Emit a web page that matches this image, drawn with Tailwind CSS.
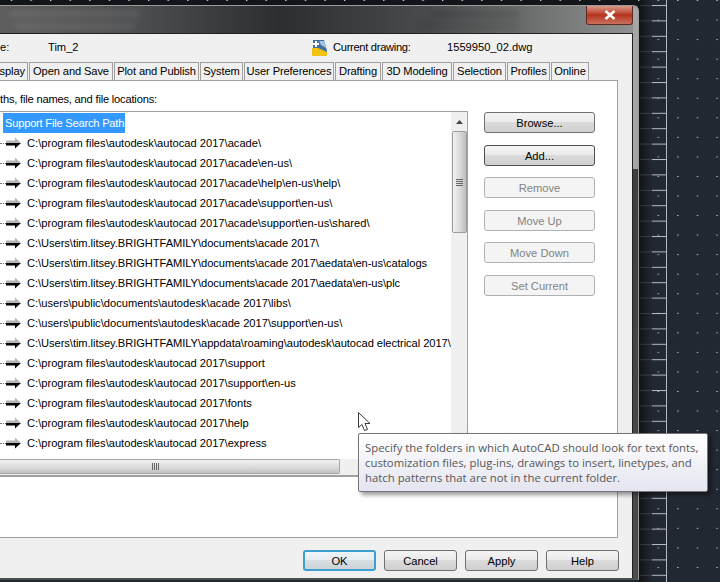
<!DOCTYPE html>
<html lang="en">
<head>
  <meta charset="UTF-8" />
  <title>Options - Files</title>
  <script src="https://cdn.jsdelivr.net/npm/@tailwindcss/browser@4"></script>
</head>
<body class="bg-[#222831]">
  <div class="relative w-[720px] h-[582px] overflow-hidden bg-[#222831] font-['Liberation_Sans',sans-serif] text-[11.15px] text-black">

    <!-- AutoCAD model space behind the dialog -->
    <svg class="absolute left-0 top-0" width="720" height="582">
      <defs>
        <pattern id="dots" x="0" y="0" width="19.6" height="19.55" patternUnits="userSpaceOnUse">
          <rect x="11" y="0" width="1" height="1" fill="#fff" />
        </pattern>
        <pattern id="rules" x="0" y="5" width="26" height="15.4" patternUnits="userSpaceOnUse">
          <rect width="26" height="1" fill="#b9bcbf" />
        </pattern>
        <linearGradient id="edge"><stop offset="0" stop-color="#0a0c0f" /><stop offset="1" stop-color="#222831" /></linearGradient>
      </defs>
      <rect x="0" y="0" width="720" height="582" fill="url(#dots)" />
      <rect x="640" y="5" width="26" height="577" fill="url(#rules)" />
      <rect x="666" y="0" width="1" height="582" fill="#b9bcbf" />
      <rect x="638" y="0" width="14" height="582" fill="url(#edge)" opacity="0.8" />
      <rect x="0" y="0" width="640" height="5" fill="#0d0f12" opacity="0.75" />
      <rect x="0" y="0" width="640" height="5" fill="url(#dots)" />
    </svg>

    <!-- Dialog window -->
    <div class="absolute left-0 top-[5px] w-[639px] h-[575px] flex flex-col rounded-tr-md border-t border-r border-[#9a9a9a] bg-[linear-gradient(#a6a6a6_0,#a6a6a6_163px,#3c3e40_163px,#4a4c4e_100%)] pr-[5px] pb-[2px] overflow-hidden">
      <div class="relative h-[27px] shrink-0 bg-[linear-gradient(90deg,#5e5e5e_0,#4c4d4e_140px,#2c2e31_280px,#4a4b4c_430px,#8f9090_630px)] overflow-hidden">
        <!-- blurred window title -->
        <div class="absolute left-[10px] top-[5px] w-[130px] h-[6px] bg-white/10 blur-[3px]"></div>
        <div class="absolute left-[15px] top-[17px] w-[120px] h-[6px] bg-white/10 blur-[3px]"></div>
        <div class="absolute left-[430px] top-[5px] w-[90px] h-[6px] bg-black/15 blur-[3px]"></div>
        <div class="absolute left-[420px] top-[17px] w-[100px] h-[6px] bg-black/10 blur-[3px]"></div>
      </div>
      <button class="absolute right-[5px] top-0 w-[47px] h-[19px] rounded-b-[3px] border border-t-0 border-[#5d2a22] bg-gradient-to-b from-[#d99a8a] via-[#b5321c] to-[#c9705c] flex items-center justify-center">
        <svg width="12" height="10" viewBox="0 0 12 10"><path d="M1.5 1 L10.5 9 M10.5 1 L1.5 9" stroke="#fff" stroke-width="2.6" /></svg>
      </button>

      <div class="flex-1 flex flex-col bg-[#f0f0f0] border-t border-r border-[#222]">
        <!-- Profile row -->
        <div class="h-[27px] shrink-0 flex items-center">
          <span class="w-[48px]">e:</span>
          <span class="w-[264px]">Tim_2</span>
          <svg class="w-[16px] h-[17px] mr-[5px]" viewBox="0 0 16 17">
            <path d="M1 1H12L15 12V14H1z" fill="#3f6ea3" />
            <path d="M7 2H12L14 9L9 6z" fill="#a9c4dd" />
            <path d="M3 2h2v2h2v2H5v2H3V6H1V4h2z" fill="#fff" />
            <path d="M0 9H6L15 13V17H0z" fill="#f2c313" />
          </svg>
          <span class="w-[114px] tracking-[-0.3px]">Current drawing:</span>
          <span>1559950_02.dwg</span>
        </div>

        <!-- Tabs -->
        <div class="h-[19px] shrink-0 flex items-end gap-[1px] whitespace-nowrap tracking-[-0.12px]">
          <div class="w-[28px] h-[18px] bg-[#f0f0f0] border border-l-0 border-b-0 border-[#a0a0a0] flex items-center justify-end pr-[2px]">splay</div>
          <div class="w-[84px] h-[18px] bg-[#f0f0f0] border border-b-0 border-[#a0a0a0] flex items-center justify-center">Open and Save</div>
          <div class="w-[85px] h-[18px] bg-[#f0f0f0] border border-b-0 border-[#a0a0a0] flex items-center justify-center">Plot and Publish</div>
          <div class="w-[43px] h-[18px] bg-[#f0f0f0] border border-b-0 border-[#a0a0a0] flex items-center justify-center">System</div>
          <div class="w-[90px] h-[18px] bg-[#f0f0f0] border border-b-0 border-[#a0a0a0] flex items-center justify-center">User Preferences</div>
          <div class="w-[46px] h-[18px] bg-[#f0f0f0] border border-b-0 border-[#a0a0a0] flex items-center justify-center">Drafting</div>
          <div class="w-[70px] h-[18px] bg-[#f0f0f0] border border-b-0 border-[#a0a0a0] flex items-center justify-center">3D Modeling</div>
          <div class="w-[53px] h-[18px] bg-[#f0f0f0] border border-b-0 border-[#a0a0a0] flex items-center justify-center">Selection</div>
          <div class="w-[43px] h-[18px] bg-[#f0f0f0] border border-b-0 border-[#a0a0a0] flex items-center justify-center">Profiles</div>
          <div class="w-[38px] h-[18px] bg-[#f0f0f0] border border-b-0 border-[#a0a0a0] flex items-center justify-center">Online</div>
        </div>

        <!-- Files tab panel -->
        <div class="w-[618px] h-[458px] shrink-0 bg-white border-t border-r border-b border-[#a0a0a0] flex flex-col">
          <div class="h-[30px] shrink-0 flex items-center pt-[6px] tracking-[-0.2px]">ths, file names, and file locations:</div>
          <div class="flex">
            <!-- Tree list -->
            <div class="relative w-[468px] h-[366px] border-t border-r border-b border-[#a0a0a0] flex flex-col">
              <div class="flex-1 flex min-h-0">
                <div class="flex-1 min-w-0 pt-[1px] overflow-hidden">
                  <div class="h-[20px] flex items-center pl-[3px]">
                    <span class="h-[20px] w-[122px] flex items-center pl-[2px] bg-[#3399ff] text-white tracking-[-0.22px] whitespace-nowrap">Support File Search Path</span>
                  </div>
                  <div id="rows"></div>
                </div>
                <!-- Vertical scrollbar -->
                <div class="w-[16px] shrink-0 bg-[#f0f0f0] flex flex-col items-center">
                  <div class="h-[19px] shrink-0 flex items-center justify-center">
                    <svg width="7" height="4" viewBox="0 0 7 4"><path d="M3.5 0L7 4H0z" fill="#444" /></svg>
                  </div>
                  <div class="w-[15px] h-[102px] rounded-[2px] border border-[#9c9c9c] bg-gradient-to-r from-[#f2f2f2] via-[#dcdcdc] to-[#bdbdbd] flex flex-col items-center justify-center gap-[1px]">
                    <span class="w-[7px] h-[1px] bg-[#666]"></span>
                    <span class="w-[7px] h-[1px] bg-[#666]"></span>
                    <span class="w-[7px] h-[1px] bg-[#666]"></span>
                    <span class="w-[7px] h-[1px] bg-[#666]"></span>
                  </div>
                </div>
              </div>
              <!-- Horizontal scrollbar -->
              <div class="h-[17px] shrink-0 bg-[#f0f0f0] border-b border-[#a0a0a0] flex">
                <div class="w-[340px] h-[15px] rounded-r-[2px] border border-l-0 border-[#a5a5a5] bg-gradient-to-b from-[#f2f2f2] via-[#dedede] to-[#c2c2c2] flex items-center justify-center gap-[1px] pr-[28px]">
                  <span class="w-[1px] h-[7px] bg-[#666]"></span>
                  <span class="w-[1px] h-[7px] bg-[#666]"></span>
                  <span class="w-[1px] h-[7px] bg-[#666]"></span>
                  <span class="w-[1px] h-[7px] bg-[#666]"></span>
                </div>
              </div>
            </div>

            <!-- Side buttons -->
            <div class="flex flex-col ml-[16px] w-[111px] pt-[1px]">
              <button class="h-[21px] pt-[1px] rounded-[3px] border border-[#707070] bg-[linear-gradient(#f4f4f4,#ebebeb_45%,#dbdbdb_50%,#cfcfcf)]">Browse...</button>
              <button class="h-[21px] pt-[1px] mt-[12px] rounded-[3px] border border-[#505050] bg-[linear-gradient(#f4f4f4,#ebebeb_45%,#dbdbdb_50%,#cfcfcf)]">Add...</button>
              <button class="h-[21px] pt-[1px] mt-[11px] rounded-[3px] border border-[#adb2b5] bg-[#f4f4f4] text-[#838383]">Remove</button>
              <button class="h-[21px] pt-[1px] mt-[12px] rounded-[3px] border border-[#adb2b5] bg-[#f4f4f4] text-[#838383]">Move Up</button>
              <button class="h-[21px] pt-[1px] mt-[11px] rounded-[3px] border border-[#adb2b5] bg-[#f4f4f4] text-[#838383]">Move Down</button>
              <button class="h-[21px] pt-[1px] mt-[12px] rounded-[3px] border border-[#adb2b5] bg-[#f4f4f4] text-[#838383]">Set Current</button>
            </div>
          </div>
        </div>

        <!-- Dialog buttons -->
        <div class="flex-1 flex justify-end items-start gap-[8px] pt-[12px] pr-[13px]">
          <button class="w-[73px] h-[21px] pt-[1px] rounded-[3px] border-2 border-[#3c9fd0] bg-[linear-gradient(#eef5f9,#e6edf1_45%,#d8dfe3_50%,#ccd3d7)]">OK</button>
          <button class="w-[73px] h-[21px] pt-[1px] rounded-[3px] border border-[#707070] bg-[linear-gradient(#f4f4f4,#ebebeb_45%,#dbdbdb_50%,#cfcfcf)]">Cancel</button>
          <button class="w-[73px] h-[21px] pt-[1px] rounded-[3px] border border-[#707070] bg-[linear-gradient(#f4f4f4,#ebebeb_45%,#dbdbdb_50%,#cfcfcf)]">Apply</button>
          <button class="w-[73px] h-[21px] pt-[1px] rounded-[3px] border border-[#707070] bg-[linear-gradient(#f4f4f4,#ebebeb_45%,#dbdbdb_50%,#cfcfcf)]">Help</button>
        </div>
      </div>
    </div>

    <!-- Mouse pointer -->
    <svg class="absolute left-[358px] top-[412px]" width="14" height="20" viewBox="0 0 14 20">
      <path d="M0.5 0.5V15.5L4 12.5L6.5 18.5L9.5 17.5L7 11.5H12z" fill="#fff" stroke="#3a3a3a" stroke-width="1" />
    </svg>

    <!-- Tooltip -->
    <div class="absolute left-[358px] top-[433px] w-[350px] h-[59px] rounded-[2px] border border-[#767676] bg-gradient-to-b from-white to-[#e4e5f0] shadow-[3px_3px_4px_rgba(0,0,0,0.4)] pl-[6px] pt-[6px] font-['Open_Sans',sans-serif] text-[11.35px] leading-[15px] text-[#575757] whitespace-nowrap">
      <div>Specify the folders in which AutoCAD should look for text fonts,</div>
      <div>customization files, plug-ins, drawings to insert, linetypes, and</div>
      <div>hatch patterns that are not in the current folder.</div>
    </div>
  </div>

  <script>
    const paths = [
      'C:\\program files\\autodesk\\autocad 2017\\acade\\',
      'C:\\program files\\autodesk\\autocad 2017\\acade\\en-us\\',
      'C:\\program files\\autodesk\\autocad 2017\\acade\\help\\en-us\\help\\',
      'C:\\program files\\autodesk\\autocad 2017\\acade\\support\\en-us\\',
      'C:\\program files\\autodesk\\autocad 2017\\acade\\support\\en-us\\shared\\',
      'C:\\Users\\tim.litsey.BRIGHTFAMILY\\documents\\acade 2017\\',
      'C:\\Users\\tim.litsey.BRIGHTFAMILY\\documents\\acade 2017\\aedata\\en-us\\catalogs',
      'C:\\Users\\tim.litsey.BRIGHTFAMILY\\documents\\acade 2017\\aedata\\en-us\\plc',
      'C:\\users\\public\\documents\\autodesk\\acade 2017\\libs\\',
      'C:\\users\\public\\documents\\autodesk\\acade 2017\\support\\en-us\\',
      'C:\\Users\\tim.litsey.BRIGHTFAMILY\\appdata\\roaming\\autodesk\\autocad electrical 2017\\',
      'C:\\program files\\autodesk\\autocad 2017\\support',
      'C:\\program files\\autodesk\\autocad 2017\\support\\en-us',
      'C:\\program files\\autodesk\\autocad 2017\\fonts',
      'C:\\program files\\autodesk\\autocad 2017\\help',
      'C:\\program files\\autodesk\\autocad 2017\\express'
    ];

    document.getElementById('rows').innerHTML = paths.map(p => `
      <div class="h-[20px] flex items-center whitespace-nowrap">
        <span class="w-[6px] shrink-0 border-t border-dotted border-[#777]"></span>
        <svg class="w-[15px] h-[12px] shrink-0" viewBox="0 0 15 12">
          <path d="M0 3.5H9V0.5L15 6H0z" fill="#b5b5b5" />
          <path d="M0 6H15L9 11.5V8.5H0z" fill="#000" />
        </svg>
        <span class="ml-[6px] ${p.includes('BRIGHTFAMILY') ? 'tracking-[-0.06px]' : ''}">${p}</span>
      </div>`).join('');
  </script>
</body>
</html>
